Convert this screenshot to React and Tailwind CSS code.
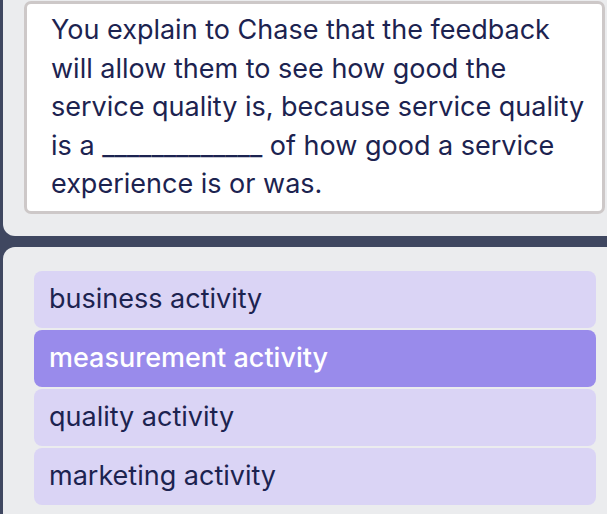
import React from 'react';

const OPTIONS = [
  { id: 'a', label: 'business activity' },
  { id: 'b', label: 'measurement activity', selected: true },
  { id: 'c', label: 'quality activity' },
  { id: 'd', label: 'marketing activity' },
];

const Option = ({ label, selected }) => (
  <div
    className={`h-[57px] flex items-center pl-[15px] rounded-[8px] text-[27px] ${
      selected ? 'bg-[#998beb] text-white font-medium' : 'bg-[#dad4f5] text-[#1c2350]'
    }`}
  >
    {label}
  </div>
);

export default function App() {
  return (
    <div
      className="w-[607px] h-[514px] bg-[#3f4760] overflow-hidden flex flex-col"
      style={{ fontFamily: 'Inter, "Noto Sans", sans-serif' }}
    >
      <div className="ml-[3px] h-[236px] bg-[#ebecee] rounded-bl-[12px] pl-[21px] pr-[2px] pt-[1px] shrink-0">
        <div className="h-[213px] bg-white border-[3px] border-[#cdc8c8] rounded-[7px] pl-[24px] pr-[14px] pt-[7px] text-[27px] leading-[38.5px] text-[#1c2350]">
          You explain to Chase that the feedback will allow them to see how good the
          service quality is, because service quality is a _____________ of how good a service
          experience is or was.
        </div>
      </div>
      <div className="ml-[3px] mt-[11px] flex-1 bg-[#ebecee] rounded-tl-[12px] pl-[31px] pr-[11px] pt-[24px]">
        <div className="flex flex-col gap-[2px]">
          {OPTIONS.map(o => (
            <Option key={o.id} label={o.label} selected={o.selected} />
          ))}
        </div>
      </div>
    </div>
  );
}
